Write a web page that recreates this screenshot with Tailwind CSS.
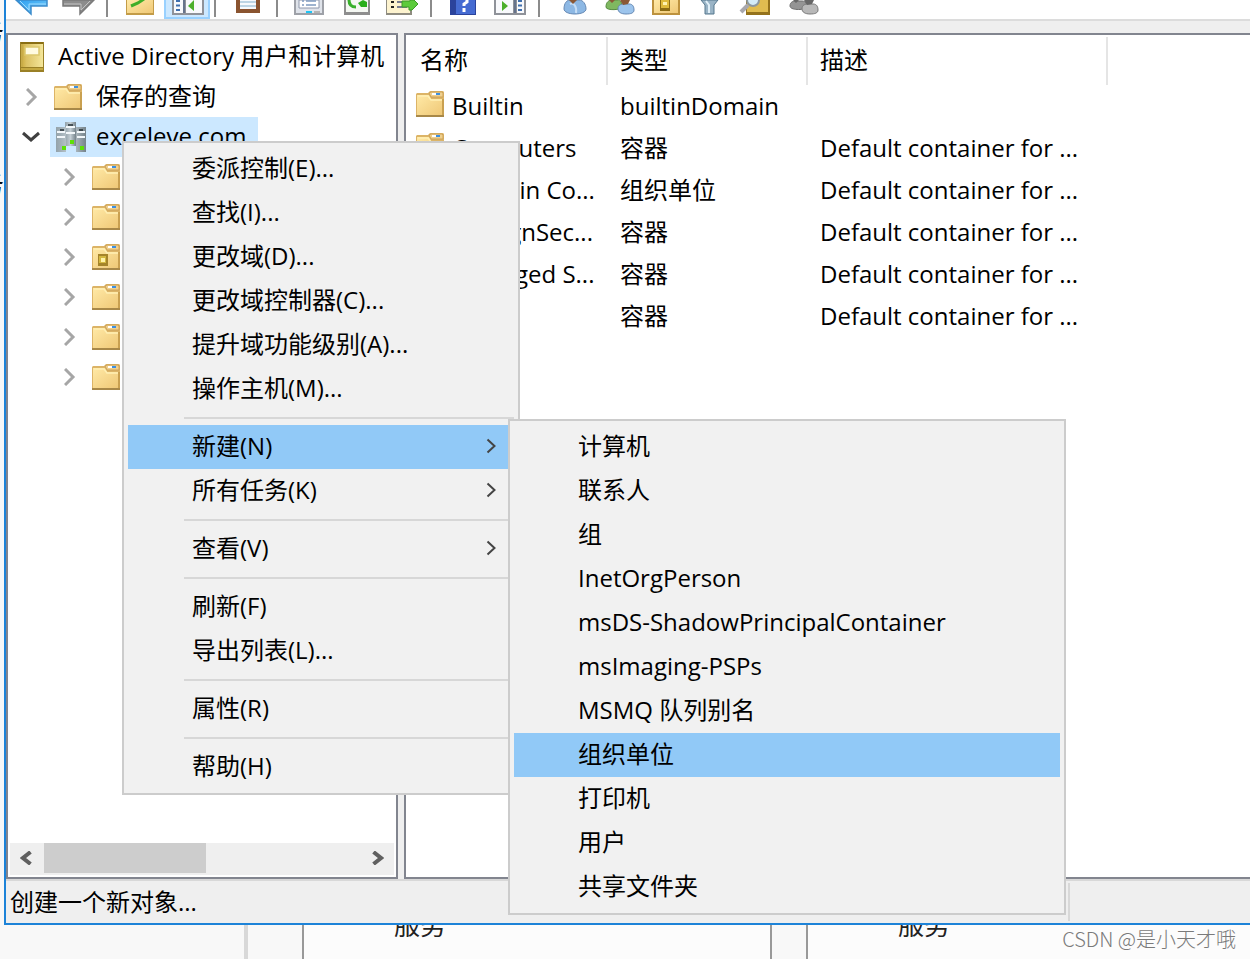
<!DOCTYPE html>
<html lang="zh-CN">
<head>
<meta charset="utf-8">
<title>Active Directory 用户和计算机</title>
<script src="https://cdn.jsdelivr.net/npm/@tailwindcss/browser@4"></script>
</head>
<body class="relative flex h-screen flex-col overflow-hidden bg-[#f8f8f8] font-['Open_Sans','Noto_Sans_CJK_SC',sans-serif] text-2xl leading-10 text-black">

<svg class="absolute size-0" aria-hidden="true">
  <defs>
    <linearGradient id="gold" x1="0" y1="0" x2="1" y2="1"><stop offset="0" stop-color="#ffe9a6"/><stop offset="1" stop-color="#efc877"/></linearGradient>
    <linearGradient id="book" x1="0" y1="0" x2="1" y2="0"><stop offset="0" stop-color="#c9a93a"/><stop offset=".25" stop-color="#dcc264"/><stop offset="1" stop-color="#f4e69a"/></linearGradient>
    <linearGradient id="steel" x1="0" y1="0" x2="1" y2="0"><stop offset="0" stop-color="#93a2aa"/><stop offset=".5" stop-color="#c3ced4"/><stop offset="1" stop-color="#74828a"/></linearGradient>
    <linearGradient id="blueArrow" x1="0" y1="0" x2="1" y2="1"><stop offset="0" stop-color="#2a9df0"/><stop offset="1" stop-color="#7cd0fa"/></linearGradient>
  </defs>
  <symbol id="folder" viewBox="0 0 28 26">
    <path d="M0 3l1-1h11l2-2h13l1 1v25H0z" fill="#dcb467"/>
    <path d="M1 4h12l2 4h11v16H1z" fill="url(#gold)"/>
    <path d="M2 5h10l3 4h11" fill="none" stroke="#fff0b4" stroke-width="1.5"/>
    <path d="M13 2l2-1h11l1 1v4H15z" fill="#efd08e" stroke="#cda258"/>
    <rect x="16" y="2" width="4" height="2" fill="#fff"/><rect x="20" y="2" width="4" height="2" fill="#3c8fe0"/>
    <path d="M0 25h28" stroke="#a88848" stroke-width="2"/><path d="M27 8v16" stroke="#c9a050" stroke-width="2"/>
  </symbol>
  <symbol id="chevron" viewBox="0 0 12 18"><path d="M1 1l8 8-8 8" fill="none" stroke="currentColor" stroke-width="3"/></symbol>
  <symbol id="arrow" viewBox="0 0 10 16"><path d="M1.500 1.500L8.500 8l-7 6.500" fill="none" stroke="#444" stroke-width="2"/></symbol>
</svg>

<div class="flex min-h-0 flex-1">
  <div class="relative w-1 shrink-0 overflow-hidden bg-[#f8f8f8] text-[26px]" aria-hidden="true">
    <span class="absolute top-3 right-0">务</span>
    <span class="absolute top-[164px] right-0">务</span>
  </div>

  <main class="flex min-w-0 flex-1 flex-col border-b-2 border-l-2 border-[#1d83d8] bg-[#efefef]">
    <div class="flex h-[21px] shrink-0 items-start overflow-hidden border-b-2 border-[#dcdcdc] bg-white pl-1" role="toolbar" aria-label="工具栏">
      <button class="w-[46px] shrink-0" aria-label="后退"><svg class="h-[19px] w-[46px]" viewBox="10 0 46 19"><path d="M16 0l15 14V6h16V0z" fill="url(#blueArrow)" stroke="#3c8ccc" stroke-width="1.500"/><path d="M20 1l9 9V4h17" fill="none" stroke="#9fdcff"/></svg></button>
      <button class="w-[46px] shrink-0" aria-label="前进"><svg class="h-[19px] w-[46px]" viewBox="56 0 46 19"><path d="M94 0L80 14V6H63V0z" fill="#8c8c8c" stroke="#7a7a7a" stroke-width="1.500"/><path d="M64 4h17v6l9-9" fill="none" stroke="#c4c4c4"/></svg></button>
      <span class="h-[17px] w-4 shrink-0 pl-1"><span class="block h-full w-0.5 bg-[#8b8b8b]"></span></span>
      <button class="w-[46px] shrink-0" aria-label="上一级"><svg class="h-[19px] w-[46px]" viewBox="118 0 46 19"><path d="M126 0h28v15h-28z" fill="#c39c48"/><path d="M127 0h26v13h-26z" fill="url(#gold)"/><path d="M131 6l7-3 6-4" stroke="#3fae28" stroke-width="3" fill="none"/></svg></button>
      <button class="w-[46px] shrink-0 border-x-2 border-b-2 border-[#99d1ff] bg-[#cce8ff]" aria-label="显示控制台树" aria-pressed="true"><svg class="h-[17px] w-[42px]" viewBox="166 0 42 17"><path d="M172 0h32v15h-32z" fill="#8f9299"/><path d="M174 0h9v13h-9zM186 0h16v13h-16z" fill="#f8f9fc"/><path d="M183 0h2v13h-2z" fill="#66738c"/><path d="M176 1h4M176 5.500h4M176 10h4" stroke="#3f6fae" stroke-width="2"/><path d="M194 0v11l-6-5 5-5z" fill="#4caf2c"/></svg></button>
      <span class="h-[17px] w-4 shrink-0 pl-1"><span class="block h-full w-0.5 bg-[#8b8b8b]"></span></span>
      <button class="w-[46px] shrink-0" aria-label="粘贴"><svg class="h-[19px] w-[46px]" viewBox="226 0 46 19"><path d="M236 0h24v13h-24z" fill="#8a5430"/><path d="M240 0h16v9h-16z" fill="#f6fafc"/><path d="M240 2h16M240 6h16" stroke="#a9c9dc" stroke-width="1.500"/></svg></button>
      <span class="h-[17px] w-4 shrink-0 pl-1"><span class="block h-full w-0.5 bg-[#8b8b8b]"></span></span>
      <button class="w-[46px] shrink-0" aria-label="属性"><svg class="h-[19px] w-[46px]" viewBox="288 0 46 19"><path d="M294 0h30v15h-30z" fill="#9ea1a8"/><path d="M296 0h26v13h-26z" fill="#dfe3ea"/><path d="M299 0h20v8h-20z" fill="#fff" stroke="#8f98ac"/><path d="M302 1h2M306 1h10M302 5h2M306 5h10" stroke="#7f9bc0" stroke-width="1.500"/><path d="M306 11h6v2h-6z" fill="#1cc4f4"/><path d="M314 11h6v2h-6z" fill="#b4b4b4"/></svg></button>
      <button class="w-[46px] shrink-0" aria-label="刷新"><svg class="h-[19px] w-[46px]" viewBox="334 0 46 19"><path d="M344 0h26v15h-26z" fill="#8e8e8e"/><path d="M346 0h22v12h-22z" fill="#f4f7f2"/><path d="M349 0c0 4 2 7 7 7" stroke="#38b02a" stroke-width="3" fill="none"/><path d="M358 3l5-3 4 2v5h-6z" fill="#2aae1c"/></svg></button>
      <button class="w-[46px] shrink-0" aria-label="导出列表"><svg class="h-[19px] w-[46px]" viewBox="380 0 46 19"><path d="M386 0h26v15h-26z" fill="#8f8c80"/><path d="M387 0h23v13h-23z" fill="#fdf3cf"/><path d="M391 2h3M391 7h3" stroke="#222" stroke-width="2"/><path d="M397 2h10M397 7h10" stroke="#777c90" stroke-width="2"/><path d="M402 1h8V0h4l4 4-6 6h-3V7h-7z" fill="#5ccb3c" stroke="#3c9a28"/></svg></button>
      <span class="h-[17px] w-4 shrink-0 pl-1"><span class="block h-full w-0.5 bg-[#8b8b8b]"></span></span>
      <button class="w-[46px] shrink-0" aria-label="帮助"><svg class="h-[19px] w-[46px]" viewBox="442 0 46 19"><path d="M450 0h26v15h-26z" fill="#2b439c"/><path d="M456 0h19v14h-19z" fill="#456bd2"/><path d="M467 0v2l-3 2v2M464 8v4" stroke="#fff" stroke-width="3" fill="none"/></svg></button>
      <button class="w-[46px] shrink-0" aria-label="显示操作窗格"><svg class="h-[19px] w-[46px]" viewBox="488 0 46 19"><path d="M494 0h32v15h-32z" fill="#8f9299"/><path d="M496 0h17v13h-17zM517 0h7v13h-7z" fill="#f8f9fc"/><path d="M514 0h2v13h-2z" fill="#66738c"/><path d="M518 1h4M518 5.500h4M518 10h4" stroke="#3f6fae" stroke-width="2"/><path d="M502 1l6 5-6 5z" fill="#4caf2c"/></svg></button>
      <span class="h-[17px] w-4 shrink-0 pl-1"><span class="block h-full w-0.5 bg-[#8b8b8b]"></span></span>
      <button class="w-[46px] shrink-0" aria-label="新建用户"><svg class="h-[19px] w-[46px]" viewBox="550 0 46 19"><path d="M564 9c0-6 3-9 6-9h9c4 0 7 4 7 9 0 3-5 5-11 5s-11-2-11-5z" fill="#8db8e4" stroke="#6689b4"/><path d="M570 4c4-2 7 3 6 9" fill="none" stroke="#c6def6" stroke-width="2"/><path d="M569 0h8l-4 4z" fill="#8a5836"/></svg></button>
      <button class="w-[46px] shrink-0" aria-label="新建组"><svg class="h-[19px] w-[46px]" viewBox="596 0 46 19"><path d="M606 7c0-5 3-7 6-7h5c4 0 5 3 5 7 0 3-16 4-16 0z" fill="#7fb860" stroke="#568c40"/><path d="M618 9c0-4 3-5 6-5h5c4 0 5 3 5 6s-3 4-8 4-8-2-8-5z" fill="#9cc4ec" stroke="#6689b4"/><path d="M620 0h10l-2 4-5 1zM609 0h6l-3 3z" fill="#8a5836"/></svg></button>
      <button class="w-[46px] shrink-0" aria-label="新建组织单位"><svg class="h-[19px] w-[46px]" viewBox="642 0 46 19"><path d="M652 0h28v15h-28z" fill="#bd923e"/><path d="M654 0h24v13h-24z" fill="url(#gold)"/><path d="M660 0h10v11h-10z" fill="#8c6c14"/><path d="M661 0h8v8h-8z" fill="#e0bb3c"/><path d="M663 2h4v3h-4z" fill="#fff3b0"/></svg></button>
      <button class="w-[46px] shrink-0" aria-label="筛选"><svg class="h-[19px] w-[46px]" viewBox="688 0 46 19"><path d="M701 0h17l-4 5v9h-9V5z" fill="#9ab4c6" stroke="#57788e"/><path d="M706 1l3 4v8" fill="none" stroke="#e2f0f8" stroke-width="2"/></svg></button>
      <button class="w-[46px] shrink-0" aria-label="查找"><svg class="h-[19px] w-[46px]" viewBox="734 0 46 19"><path d="M746 0h24v15h-24z" fill="#94721c"/><path d="M747 0h21v12h-21z" fill="#e0bc50"/><circle cx="753" cy="0" r="6" fill="#d4ecf8" stroke="#8c98a0" stroke-width="2"/><path d="M748 5l-7 7" stroke="#a8a8ae" stroke-width="4"/></svg></button>
      <button class="w-[46px] shrink-0" aria-label="添加到组"><svg class="h-[19px] w-[46px]" viewBox="780 0 46 19"><path d="M790 6c0-4 3-5 6-5h6c4 0 5 3 5 6 0 3-17 4-17-1z" fill="#949494" stroke="#6c6c6c"/><path d="M802 9c0-4 3-5 6-5h5c4 0 5 3 5 6s-3 4-8 4-8-2-8-5z" fill="#b8b8b8" stroke="#7a7a7a"/><path d="M804 0h10l-2 4-5 1zM793 0h6l-3 3z" fill="#666"/></svg></button>
    </div>

    <div class="mt-3 flex min-h-0 flex-1">
      <nav class="flex w-[392px] shrink-0 flex-col overflow-hidden border-2 border-[#82858f] bg-white" aria-label="控制台树">
        <ul class="flex-1 pt-0.5 whitespace-nowrap">
          <li class="flex h-10 items-center pl-3">
            <svg class="mr-3.5 h-[30px] w-6" viewBox="0 0 24 30"><path d="M0 0h24v30H0z" fill="#9a8026"/><path d="M1 2h22v23H1z" fill="url(#book)"/><path d="M1 1h22" stroke="#8a6f14" stroke-width="2"/><path d="M1 2h2v23H1z" fill="#c8ac48"/><path d="M5 5h14v8H5z" fill="#fffbe0" stroke="#dcc86c" stroke-width="1.500"/><path d="M1 26h22v2H1z" fill="#c4a840"/></svg><span class="pb-0.5">Active Directory 用户和计算机</span></li>
          <li class="flex h-10 items-center pl-[18px] text-[#a6a6a6]"><svg class="mr-4 h-[18px] w-3"><use href="#chevron"/></svg><svg class="mr-3.5 h-[26px] w-7"><use href="#folder"/></svg><span class="pb-0.5 text-black">保存的查询</span></li>
          <li class="flex h-10 items-center pl-3.5">
            <svg class="mr-2.5 h-3 w-[18px] text-[#404040]" viewBox="0 0 18 12"><path d="M1 2l8 7 8-7" fill="none" stroke="currentColor" stroke-width="3"/></svg>
            <span class="flex h-10 items-center bg-[#cce8ff] pr-3 pl-1.5">
              <svg class="mr-2.5 h-[30px] w-[30px]" viewBox="0 0 30 30"><path d="M9 0h11v24H9z" fill="url(#steel)"/><path d="M0 5h10v25H0zM20 5h10v25H20z" fill="url(#steel)"/><path d="M1 10h8M21 10h8M1 15h8M21 15h8M10 5h9M10 11h9" stroke="#f2f7fa" stroke-width="2"/><path d="M4 8h4M23 8h4M12 3h5" stroke="#222c32" stroke-width="1.500"/><path d="M6 24h4v4H6zM24 24h4v4h-4zM14 18h4v4h-4z" fill="#5ee008"/></svg><span class="pb-0.5">exceleve.com</span></span></li>
          <li class="flex h-10 items-center pl-14 text-[#a6a6a6]"><svg class="mr-4 h-[18px] w-3"><use href="#chevron"/></svg><svg class="h-[26px] w-7"><use href="#folder"/></svg></li>
          <li class="flex h-10 items-center pl-14 text-[#a6a6a6]"><svg class="mr-4 h-[18px] w-3"><use href="#chevron"/></svg><svg class="h-[26px] w-7"><use href="#folder"/></svg></li>
          <li class="flex h-10 items-center pl-14 text-[#a6a6a6]"><svg class="mr-4 h-[18px] w-3"><use href="#chevron"/></svg><svg class="h-[26px] w-7" viewBox="0 0 28 26"><use href="#folder" width="28" height="26"/><path d="M6 10h10v12H6z" fill="#a5842a"/><path d="M7 12h7v7H7z" fill="#d4b840"/><path d="M9 14h4v4H9z" fill="#fff2a8"/></svg></li>
          <li class="flex h-10 items-center pl-14 text-[#a6a6a6]"><svg class="mr-4 h-[18px] w-3"><use href="#chevron"/></svg><svg class="h-[26px] w-7"><use href="#folder"/></svg></li>
          <li class="flex h-10 items-center pl-14 text-[#a6a6a6]"><svg class="mr-4 h-[18px] w-3"><use href="#chevron"/></svg><svg class="h-[26px] w-7"><use href="#folder"/></svg></li>
          <li class="flex h-10 items-center pl-14 text-[#a6a6a6]"><svg class="mr-4 h-[18px] w-3"><use href="#chevron"/></svg><svg class="h-[26px] w-7"><use href="#folder"/></svg></li>
        </ul>
        <div class="mx-0.5 mb-0.5 flex h-8 shrink-0 bg-[#efefef] text-[#606060]">
          <button class="flex h-[30px] w-8 items-center justify-center" aria-label="向左滚动"><svg class="h-3.5 w-3" viewBox="0 0 12 14"><path d="M10.500 1L3 7l7.500 6" fill="none" stroke="currentColor" stroke-width="4"/></svg></button>
          <div class="ml-0.5 h-[30px] w-[162px] bg-[#cdcdcd]"></div>
          <button class="ml-auto flex h-[30px] w-8 items-center justify-center" aria-label="向右滚动"><svg class="h-3.5 w-3" viewBox="0 0 12 14"><path d="M1.500 1L9 7l-7.500 6" fill="none" stroke="currentColor" stroke-width="4"/></svg></button>
        </div>
      </nav>

      <section class="ml-1.5 min-w-0 flex-1 overflow-hidden border-y-2 border-l-2 border-[#82858f] bg-white pt-0.5">
        <table class="w-[702px] table-fixed border-collapse text-left whitespace-nowrap">
          <colgroup><col class="w-[202px]"><col class="w-[200px]"><col class="w-[300px]"></colgroup>
          <thead>
            <tr class="h-12">
              <th class="p-0 font-normal"><div class="h-12 border-r-2 border-[#e5e5e5] pl-3.5 leading-[46px]">名称</div></th>
              <th class="p-0 font-normal"><div class="h-12 border-r-2 border-[#e5e5e5] pl-3 leading-[46px]">类型</div></th>
              <th class="p-0 font-normal"><div class="h-12 border-r-2 border-[#e5e5e5] pl-3 leading-[46px]">描述</div></th>
            </tr>
          </thead>
          <tbody>
            <tr class="h-[42px]"><td class="p-0"><div class="flex items-center pl-2.5"><svg class="mr-2 mb-1 h-[26px] w-7"><use href="#folder"/></svg>Builtin</div></td><td class="p-0 pl-3">builtinDomain</td><td class="p-0 pl-3"></td></tr>
            <tr class="h-[42px]"><td class="p-0"><div class="flex items-center pl-2.5"><svg class="mr-2 mb-1 h-[26px] w-7"><use href="#folder"/></svg>Computers</div></td><td class="p-0 pl-3">容器</td><td class="p-0 pl-3">Default container for ...</td></tr>
            <tr class="h-[42px]"><td class="p-0"><div class="flex items-center pl-2.5"><svg class="mr-2 mb-1 h-[26px] w-7"><use href="#folder"/></svg>Domain Co...</div></td><td class="p-0 pl-3">组织单位</td><td class="p-0 pl-3">Default container for ...</td></tr>
            <tr class="h-[42px]"><td class="p-0"><div class="flex items-center pl-2.5"><svg class="mr-2 mb-1 h-[26px] w-7"><use href="#folder"/></svg>ForeignSec...</div></td><td class="p-0 pl-3">容器</td><td class="p-0 pl-3">Default container for ...</td></tr>
            <tr class="h-[42px]"><td class="p-0"><div class="flex items-center pl-2.5"><svg class="mr-2 mb-1 h-[26px] w-7"><use href="#folder"/></svg>Managed S...</div></td><td class="p-0 pl-3">容器</td><td class="p-0 pl-3">Default container for ...</td></tr>
            <tr class="h-[42px]"><td class="p-0"><div class="flex items-center pl-2.5"><svg class="mr-2 mb-1 h-[26px] w-7"><use href="#folder"/></svg>Users</div></td><td class="p-0 pl-3">容器</td><td class="p-0 pl-3">Default container for ...</td></tr>
          </tbody>
        </table>
      </section>
    </div>

    <footer class="flex h-11 shrink-0 border-t-2 border-[#d8d8d8]">
      <div class="my-0.5 w-[1064px] border-r-2 border-[#d8d8d8] pl-1 leading-[38px]">创建一个新对象...</div>
    </footer>
  </main>
</div>

<div class="flex h-[34px] shrink-0 overflow-hidden text-[26px] leading-[0px] text-[#222]">
  <div class="w-[248px] shrink-0 border-r-4 border-[#d8d8d8]"></div>
  <div class="ml-[54px] w-[470px] shrink-0 border-x-2 border-[#999] bg-[#fcfcfc] pl-[90px]">服务</div>
  <div class="ml-[34px] flex flex-1 justify-between border-l-2 border-[#999] bg-[#fcfcfc] pr-3.5 pl-[90px]">服务
    <span class="font-['Noto_Sans_CJK_SC',sans-serif] text-xl leading-7 font-light text-[#7a7a7a]">CSDN @是小天才哦</span>
  </div>
</div>

<ul class="absolute top-[141px] left-[122px] w-[398px] border-2 border-[#ccc] bg-[#f1f1f1] p-1 leading-[42px]" role="menu">
  <li><button class="block h-11 w-full pb-0.5 pl-16 text-left" role="menuitem">委派控制(E)...</button></li>
  <li><button class="block h-11 w-full pb-0.5 pl-16 text-left" role="menuitem">查找(I)...</button></li>
  <li><button class="block h-11 w-full pb-0.5 pl-16 text-left" role="menuitem">更改域(D)...</button></li>
  <li><button class="block h-11 w-full pb-0.5 pl-16 text-left" role="menuitem">更改域控制器(C)...</button></li>
  <li><button class="block h-11 w-full pb-0.5 pl-16 text-left" role="menuitem">提升域功能级别(A)...</button></li>
  <li><button class="block h-11 w-full pb-0.5 pl-16 text-left" role="menuitem">操作主机(M)...</button></li>
  <li class="my-1.5 ml-14 h-0.5 bg-[#d7d7d7]" role="separator"></li>
  <li><button class="flex h-11 w-full items-center justify-between bg-[#91c9f7] pr-[18px] pb-0.5 pl-16" role="menuitem">新建(N)<svg class="h-4 w-2.5"><use href="#arrow"/></svg></button></li>
  <li><button class="flex h-11 w-full items-center justify-between pr-[18px] pb-0.5 pl-16" role="menuitem">所有任务(K)<svg class="h-4 w-2.5"><use href="#arrow"/></svg></button></li>
  <li class="my-1.5 ml-14 h-0.5 bg-[#d7d7d7]" role="separator"></li>
  <li><button class="flex h-11 w-full items-center justify-between pr-[18px] pb-0.5 pl-16" role="menuitem">查看(V)<svg class="h-4 w-2.5"><use href="#arrow"/></svg></button></li>
  <li class="my-1.5 ml-14 h-0.5 bg-[#d7d7d7]" role="separator"></li>
  <li><button class="block h-11 w-full pb-0.5 pl-16 text-left" role="menuitem">刷新(F)</button></li>
  <li><button class="block h-11 w-full pb-0.5 pl-16 text-left" role="menuitem">导出列表(L)...</button></li>
  <li class="my-1.5 ml-14 h-0.5 bg-[#d7d7d7]" role="separator"></li>
  <li><button class="block h-11 w-full pb-0.5 pl-16 text-left" role="menuitem">属性(R)</button></li>
  <li class="my-1.5 ml-14 h-0.5 bg-[#d7d7d7]" role="separator"></li>
  <li><button class="block h-11 w-full pb-0.5 pl-16 text-left" role="menuitem">帮助(H)</button></li>
</ul>

<ul class="absolute top-[419px] left-[508px] w-[558px] border-2 border-[#ccc] bg-[#f1f1f1] p-1 leading-[42px]" role="menu">
  <li><button class="block h-11 w-full pb-0.5 pl-16 text-left" role="menuitem">计算机</button></li>
  <li><button class="block h-11 w-full pb-0.5 pl-16 text-left" role="menuitem">联系人</button></li>
  <li><button class="block h-11 w-full pb-0.5 pl-16 text-left" role="menuitem">组</button></li>
  <li><button class="block h-11 w-full pb-0.5 pl-16 text-left" role="menuitem">InetOrgPerson</button></li>
  <li><button class="block h-11 w-full pb-0.5 pl-16 text-left" role="menuitem">msDS-ShadowPrincipalContainer</button></li>
  <li><button class="block h-11 w-full pb-0.5 pl-16 text-left" role="menuitem">msImaging-PSPs</button></li>
  <li><button class="block h-11 w-full pb-0.5 pl-16 text-left" role="menuitem">MSMQ 队列别名</button></li>
  <li><button class="block h-11 w-full bg-[#91c9f7] pb-0.5 pl-16 text-left" role="menuitem">组织单位</button></li>
  <li><button class="block h-11 w-full pb-0.5 pl-16 text-left" role="menuitem">打印机</button></li>
  <li><button class="block h-11 w-full pb-0.5 pl-16 text-left" role="menuitem">用户</button></li>
  <li><button class="block h-11 w-full pb-0.5 pl-16 text-left" role="menuitem">共享文件夹</button></li>
</ul>
</body>
</html>
